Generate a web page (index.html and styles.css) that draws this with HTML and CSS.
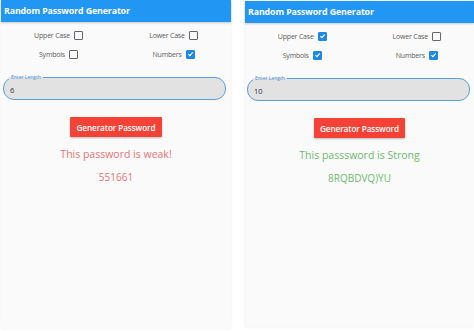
FILE: index.html
```html
<!DOCTYPE html>
<html>
<head>
<meta charset="utf-8">
<link rel="stylesheet" href="styles.css">
</head>
<body>
<div class="screens">
  <div class="phone">
    <div class="appbar">Random Password Generator</div>
    <div class="options">
      <label class="opt"><span>Upper Case</span><span class="box"></span></label>
      <label class="opt"><span>Lower Case</span><span class="box"></span></label>
      <label class="opt"><span>Symbols</span><span class="box"></span></label>
      <label class="opt"><span>Numbers</span><span class="box on"><svg viewBox="0 0 10 10"><path d="M2 5.2 L4.2 7.3 L8.2 2.8" /></svg></span></label>
    </div>
    <div class="field">
      <span class="flabel">Enter Length</span>
      <span class="fvalue">6</span>
    </div>
    <div class="actions">
      <button class="gen">Generator Password</button>
      <div class="msg weak">This password is weak!</div>
      <div class="pw weak">551661</div>
    </div>
  </div>
  <div class="phone right">
    <div class="appbar">Random Password Generator</div>
    <div class="options">
      <label class="opt"><span>Upper Case</span><span class="box on"><svg viewBox="0 0 10 10"><path d="M2 5.2 L4.2 7.3 L8.2 2.8" /></svg></span></label>
      <label class="opt"><span>Lower Case</span><span class="box"></span></label>
      <label class="opt"><span>Symbols</span><span class="box on"><svg viewBox="0 0 10 10"><path d="M2 5.2 L4.2 7.3 L8.2 2.8" /></svg></span></label>
      <label class="opt"><span>Numbers</span><span class="box on"><svg viewBox="0 0 10 10"><path d="M2 5.2 L4.2 7.3 L8.2 2.8" /></svg></span></label>
    </div>
    <div class="field">
      <span class="flabel">Enter Length</span>
      <span class="fvalue">10</span>
    </div>
    <div class="actions">
      <button class="gen">Generator Password</button>
      <div class="msg strong">This passsword is Strong</div>
      <div class="pw strong">8RQBDVQ)YU</div>
    </div>
  </div>
</div>
</body>
</html>
```
FILE: styles.css
```css
html, body {
  margin: 0;
  padding: 0;
  background: #ffffff;
}
body {
  font-family: "Open Sans", "Noto Sans", sans-serif;
  width: 474px;
  height: 331px;
  overflow: hidden;
}
.screens {
  display: flex;
  gap: 14px;
  padding-left: 1px;
}
.phone {
  width: 230px;
  height: 328px;
  background: #fafafa;
  box-shadow: 0 0 3px rgba(0,0,0,0.08);
  display: flex;
  flex-direction: column;
}
.phone.right {
  width: 229px;
  height: 326px;
  margin-top: 1px;
}
.appbar {
  height: 22px;
  background: #2196f3;
  color: #fff;
  font-weight: 700;
  font-size: 8.8px;
  line-height: 22px;
  padding-left: 3px;
  box-shadow: 0 1px 2px rgba(0,0,0,0.2);
  letter-spacing: -0.1px;
}
.options {
  display: grid;
  grid-template-columns: 1fr 1fr;
  row-gap: 7px;
  padding-top: 7px;
}
.opt {
  display: flex;
  justify-content: center;
  align-items: center;
  gap: 4px;
  font-size: 7px;
  color: #5c5c5c;
  height: 12px;
  letter-spacing: -0.2px;
}
.box {
  width: 7px;
  height: 7px;
  border: 1.2px solid #666;
  border-radius: 1px;
  display: inline-flex;
  align-items: center;
  justify-content: center;
}
.box.on {
  background: #1e88e5;
  border-color: #1e88e5;
}
.box svg {
  width: 8px;
  height: 8px;
  fill: none;
  stroke: #fff;
  stroke-width: 1.6;
}
.field {
  position: relative;
  margin: 17px 5px 0 2px;
  height: 21px;
  border: 1.4px solid #5a9fdb;
  border-radius: 11px;
  background: #e2e2e2;
  display: flex;
  align-items: center;
  padding-left: 6px;
}
.right .field {
  margin-left: 2px;
  margin-right: 4px;
}
.flabel {
  position: absolute;
  left: 5px;
  top: -4px;
  font-size: 5px;
  color: #4a90d9;
  background: linear-gradient(#fafafa 50%, #e2e2e2 50%);
  padding: 0 2px;
  line-height: 6px;
}
.fvalue {
  font-size: 7.5px;
  color: #333;
  padding-top: 2px;
}
.actions {
  display: flex;
  flex-direction: column;
  align-items: center;
  padding-top: 17px;
}
.gen {
  font-family: inherit;
  background: #f44336;
  color: #fff;
  border: none;
  font-size: 8.2px;
  font-weight: 600;
  height: 20px;
  padding: 0 6px;
  border-radius: 1px;
  box-shadow: 0 1px 2px rgba(0,0,0,0.25);
  letter-spacing: -0.1px;
}
.msg {
  margin-top: 10px;
  font-size: 10.5px;
  line-height: 14px;
}
.pw {
  margin-top: 9px;
  font-size: 10px;
  line-height: 14px;
}
.weak { color: #e57373; }
.strong { color: #6dbb6c; }
```
